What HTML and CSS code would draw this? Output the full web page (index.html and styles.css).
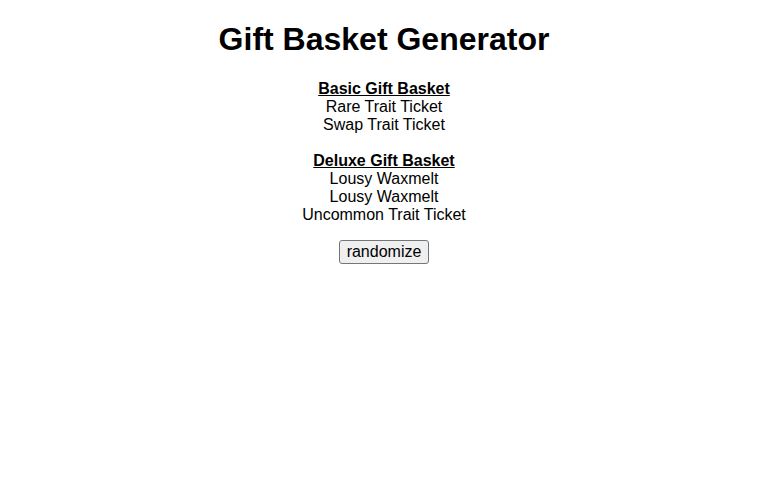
FILE: index.html
```html
<!DOCTYPE html>
<html lang="en">
<head>
  <meta charset="UTF-8" />
  <title>Gift Basket Generator</title>
  <link rel="stylesheet" href="styles.css">
</head>
<body>
  <h1 class="titulo">Gift Basket Generator</h1>

  <div class="cestas">
    <div class="cesta">
      <div class="cesta-nome">Basic Gift Basket</div>
      <div>Rare Trait Ticket</div>
      <div>Swap Trait Ticket</div>
    </div>

    <div class="cesta">
      <div class="cesta-nome">Deluxe Gift Basket</div>
      <div>Lousy Waxmelt</div>
      <div>Lousy Waxmelt</div>
      <div>Uncommon Trait Ticket</div>
    </div>
  </div>

  <div class="acoes">
    <button type="button" class="btn">randomize</button>
  </div>
</body>
</html>
```

FILE: styles.css
```css
body {
  margin: 0 8px;
  font-family: "Liberation Sans", Arial, sans-serif;
  font-size: 16px;
  color: #000;
  background: #fff;
  text-align: center;
}

.titulo {
  font-size: 32px;
  font-weight: bold;
  margin: 21.44px 0;
}

.cestas {
  display: flex;
  flex-direction: column;
  gap: 18px;
  line-height: 18px;
}

.cesta-nome {
  font-weight: bold;
  text-decoration: underline;
}

.acoes {
  margin-top: 16px;
}

.btn {
  font-family: "Liberation Sans", Arial, sans-serif;
  font-size: 16px;
  line-height: 18px;
  color: #000;
  background-color: #efefef;
  border: 1px solid #767676;
  border-radius: 3px;
  padding: 2px 7px;
}
```
